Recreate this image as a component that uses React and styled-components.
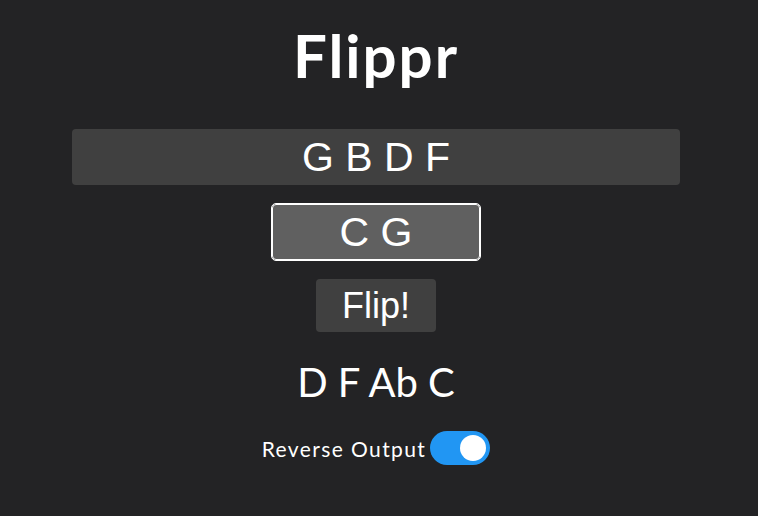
import React, { useState } from 'react';
import styled, { createGlobalStyle } from 'styled-components';

const GlobalStyle = createGlobalStyle`
  body {
    margin: 0;
    background-color: #232325;
    color: white;
    font-family: "Lato", "DejaVu Sans", sans-serif;
  }
`;

const Page = styled.div`
  display: flex;
  flex-direction: column;
  align-items: center;
  padding: 18px 6px 0 0;
`;

const Title = styled.h1`
  margin: 0;
  font-size: 60px;
  font-weight: 700;
  line-height: 74px;
  letter-spacing: 2px;
`;

const ChordInput = styled.input`
  box-sizing: border-box;
  width: ${props => props.$width}px;
  height: 56px;
  margin-top: ${props => props.$top}px;
  border: 1px solid ${props => (props.$focused ? 'white' : 'transparent')};
  border-radius: 4px;
  outline: ${props => (props.$focused ? '1px solid white' : 'none')};
  outline-offset: 0;
  background-color: ${props => (props.$focused ? '#606060' : '#404040')};
  color: white;
  text-align: center;
  font-family: "Liberation Sans", Arial, sans-serif;
  font-size: 41px;
`;

const FlipButton = styled.button`
  margin-top: 19px;
  width: 120px;
  height: 53px;
  border: none;
  border-radius: 4px;
  background-color: #404040;
  color: white;
  font-family: "Liberation Sans", Arial, sans-serif;
  font-size: 36px;
  cursor: pointer;
`;

const Output = styled.div`
  margin-top: 26px;
  font-size: 40px;
  line-height: 48px;
`;

const ToggleRow = styled.label`
  display: flex;
  align-items: center;
  gap: 4px;
  margin-top: 25px;
  font-size: 21px;
  letter-spacing: 1.4px;
  cursor: pointer;
`;

const Track = styled.span`
  position: relative;
  width: 60px;
  height: 34px;
  border-radius: 17px;
  background-color: ${props => (props.$on ? '#2196f3' : '#cccccc')};
  transition: background-color 0.2s;
`;

const Knob = styled.span`
  position: absolute;
  top: 4px;
  left: ${props => (props.$on ? '30px' : '4px')};
  width: 26px;
  height: 26px;
  border-radius: 50%;
  background-color: white;
  transition: left 0.2s;
`;

export default function App() {
  const [reverse, setReverse] = useState(true);

  return (
    <Page>
      <GlobalStyle />
      <Title>Flippr</Title>
      <ChordInput $width={608} $top={37} defaultValue="G B D F" />
      <ChordInput $width={208} $top={19} $focused defaultValue="C G" />
      <FlipButton>Flip!</FlipButton>
      <Output>D F Ab C</Output>
      <ToggleRow onClick={() => setReverse(!reverse)}>
        Reverse Output
        <Track $on={reverse}>
          <Knob $on={reverse} />
        </Track>
      </ToggleRow>
    </Page>
  );
}
